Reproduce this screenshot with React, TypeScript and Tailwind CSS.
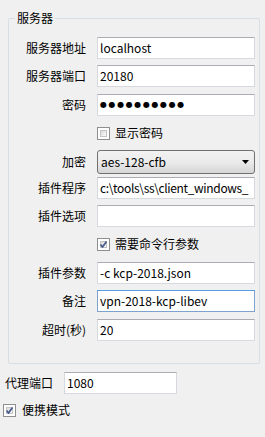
import React from "react";

const font = { fontFamily: '"Noto Sans CJK SC", "Microsoft YaHei", sans-serif' };

function Check({ checked }: { checked?: boolean }) {
  return (
    <span className="relative w-[13px] h-[13px] border border-[#8e8f8f] bg-white flex items-center justify-center shrink-0">
      <span className="absolute inset-[2px] border border-[#c5c5c5] bg-gradient-to-br from-[#dcdcdc] to-[#fbfbfb]" />
      {checked && (
        <svg viewBox="0 0 11 11" className="absolute inset-0 w-[11px] h-[11px]">
          <path d="M2.5 5.5 L4.5 8 L8.5 2.5" fill="none" stroke="#4a5d8c" strokeWidth="1.8" strokeLinejoin="round" />
        </svg>
      )}
    </span>
  );
}

function Input({ value, focused, w = "w-[158px]", extra = "" }: { value: string; focused?: boolean; w?: string; extra?: string }) {
  return (
    <div
      className={`${w} h-[22px] bg-white border ${
        focused ? "border-[#7da2ce] border-t-[#569de5]" : "border-[#d6d9de] border-t-[#abadb3]"
      } flex items-center pl-[2px] overflow-hidden whitespace-nowrap text-[12px] text-black leading-none ${extra}`}
    >
      {value}
    </div>
  );
}

function Row({ label, children, mt }: { label: string; children: React.ReactNode; mt: string }) {
  return (
    <div className={`flex items-center ${mt}`}>
      <div className="w-[77px] text-right text-[12px] text-black leading-none">{label}</div>
      <div className="ml-[11px]">{children}</div>
    </div>
  );
}

export default function App() {
  return (
    <div className="w-[265px] h-[437px] bg-[#f0f0f0] pt-[18px] overflow-hidden" style={font}>
      <div className="ml-[8px] w-[252px] relative border border-[#d5dfe5] rounded-[2px] pt-[18px] pb-[22px]">
        <div className="absolute left-[6px] top-[-8px] px-[2px] bg-[#f0f0f0] text-[12px] leading-[14px] text-black">
          服务器
        </div>
        <Row label="服务器地址" mt="mt-0">
          <Input value="localhost" />
        </Row>
        <Row label="服务器端口" mt="mt-[6px]">
          <Input value="20180" />
        </Row>
        <Row label="密码" mt="mt-[7px]">
          <div className="w-[158px] h-[22px] bg-white border border-[#d6d9de] border-t-[#abadb3] flex items-center pl-[2px] overflow-hidden whitespace-nowrap text-[8px] tracking-[1.6px] text-black leading-none" style={{ fontFamily: '"DejaVu Sans", sans-serif' }}>
            ●●●●●●●●●●
          </div>
        </Row>
        <div className="flex items-center h-[22px] mt-[6px] pl-[88px]">
          <Check />
          <span className="ml-[5px] text-[12px] leading-none text-black">显示密码</span>
        </div>
        <Row label="加密" mt="mt-[6px]">
          <div className="w-[158px] h-[24px] rounded-[3px] border border-[#707070] bg-gradient-to-b from-[#f2f2f2] via-[#ebebeb] to-[#d6d6d6] flex items-center justify-between pl-[3px] pr-[5px] text-[12px] leading-none text-black">
            <span>aes-128-cfb</span>
            <svg viewBox="0 0 7 4" className="w-[7px] h-[4px]">
              <path d="M0 0 H7 L3.5 4 Z" fill="#000" />
            </svg>
          </div>
        </Row>
        <Row label="插件程序" mt="mt-[3px]">
          <Input value="c:\tools\ss\client_windows_" extra="tracking-[-0.35px] pl-[1px]" />
        </Row>
        <Row label="插件选项" mt="mt-[6px]">
          <Input value="" />
        </Row>
        <div className="flex items-center h-[22px] mt-[6px] pl-[88px]">
          <Check checked />
          <span className="ml-[5px] text-[12px] leading-none text-black">需要命令行参数</span>
        </div>
        <Row label="插件参数" mt="mt-[7px]">
          <Input value="-c kcp-2018.json" />
        </Row>
        <Row label="备注" mt="mt-[6px]">
          <Input value="vpn-2018-kcp-libev" focused />
        </Row>
        <Row label="超时(秒)" mt="mt-[7px]">
          <Input value="20" />
        </Row>
      </div>
      <div className="flex items-center mt-[8px]">
        <span className="ml-[5px] w-[48px] text-[12px] leading-none text-black">代理端口</span>
        <div className="ml-[11px]">
          <Input value="1080" w="w-[113px]" />
        </div>
      </div>
      <div className="flex items-center h-[22px] mt-[5px] pl-[3px]">
        <Check checked />
        <span className="ml-[6px] text-[12px] leading-none text-black">便携模式</span>
      </div>
    </div>
  );
}
